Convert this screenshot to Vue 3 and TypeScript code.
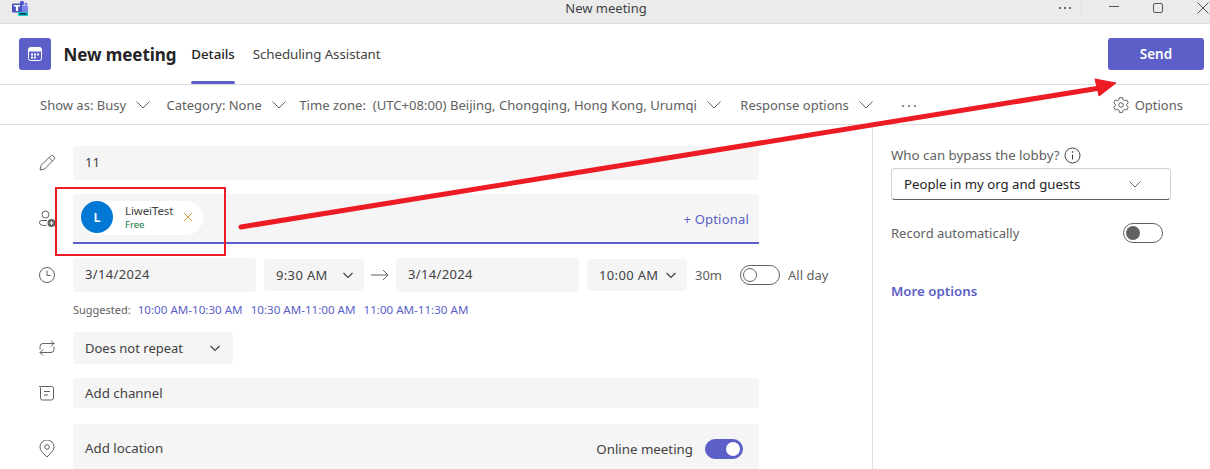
<script setup lang="ts">
const toolbar: string[] = ['Show as: Busy', 'Category: None', 'Time zone:  (UTC+08:00) Beijing, Chongqing, Hong Kong, Urumqi', 'Response options']
const slots: string[] = ['10:00 AM-10:30 AM', '10:30 AM-11:00 AM', '11:00 AM-11:30 AM']
</script>

<template>
  <div class="app">
    <div class="titlebar">
      <svg class="teams" width="18" height="16" viewBox="0 0 18 16">
        <circle cx="11" cy="3" r="2.2" fill="#5059c9" />
        <circle cx="15" cy="4" r="1.6" fill="#7b83eb" />
        <rect x="10" y="5.5" width="7" height="7" rx="1.5" fill="#7b83eb" />
        <rect x="1" y="3.5" width="10" height="9" rx="1" fill="#4b53bc" />
        <rect x="4.9" y="5" width="2.2" height="6" fill="#fff" />
        <rect x="3" y="5" width="6" height="1.6" fill="#fff" />
        <rect x="7" y="12" width="10" height="4" fill="#14c8c0" />
        <rect x="8.5" y="13" width="7" height="1.6" fill="#1b2a5c" />
      </svg>
      <span class="wintitle">New meeting</span>
      <div class="winctl">
        <span class="dots">
          <i></i><i></i><i></i>
        </span>
        <span class="sep"></span>
        <svg class="ctl1" width="12" height="12" viewBox="0 0 12 12"><path d="M1 4.500h10" stroke="#555" fill="none" /></svg>
        <svg class="ctl2" width="12" height="12" viewBox="0 0 12 12"><rect x="1.500" y="1.500" width="9" height="9" rx="1.500" stroke="#555" fill="none" /></svg>
        <svg class="ctl3" width="12" height="12" viewBox="0 0 12 12"><path d="M.5.5l11 11M11.500.5l-11 11" stroke="#555" fill="none" /></svg>
      </div>
    </div>

    <header class="head">
      <div class="logo">
        <svg width="16" height="16" viewBox="0 0 16 16">
          <rect x="1.500" y="1.500" width="13" height="13" rx="2" fill="none" stroke="#fff" stroke-width="1" />
          <rect x="1.500" y="1.500" width="13" height="4" rx="1.500" fill="#fff" />
          <g fill="#fff">
            <rect x="4" y="7.500" width="2" height="2" /><rect x="7" y="7.500" width="2" height="2" /><rect x="10" y="7.500" width="2" height="2" />
            <rect x="4" y="10.500" width="2" height="2" /><rect x="7" y="10.500" width="2" height="2" />
          </g>
        </svg>
      </div>
      <h1 class="h1">New meeting</h1>
      <nav class="tabs">
        <span class="tab active">Details</span>
        <span class="tab">Scheduling Assistant</span>
      </nav>
      <button class="send">Send</button>
    </header>

    <div class="toolbar">
      <span v-for="t in toolbar" :key="t" class="tool">
        {{ t }}
        <svg width="14" height="14" viewBox="0 0 14 14"><path d="M.5 3.500l6.500 6.500 6.500-6.500" fill="none" stroke="#616161" /></svg>
      </span>
      <span class="more"><i></i><i></i><i></i></span>
      <span class="options">
        <svg width="18" height="18" viewBox="0 0 18 18" fill="none" stroke="#616161">
          <path d="M7.400 1.600h3.200l.5 2.200 1.500.9 2.100-.7 1.600 2.800-1.600 1.500v1.400l1.600 1.500-1.600 2.800-2.100-.7-1.500.9-.5 2.200H7.400l-.5-2.200-1.500-.9-2.100.7-1.600-2.800 1.600-1.500V8.300L1.700 6.800l1.600-2.800 2.100.7 1.500-.9z" stroke-linejoin="round" />
          <circle cx="9" cy="9" r="2.300" />
        </svg>
        Options
      </span>
    </div>

    <div class="body">
      <main class="main">
        <div class="row r-title">
          <svg class="ic" width="18" height="18" viewBox="0 0 18 18" fill="none" stroke="#616161">
            <path d="M2 16l1-4.500L12.500 2a1.800 1.800 0 0 1 2.600 0l.9.9a1.800 1.800 0 0 1 0 2.600L6.500 15z" stroke-linejoin="round" /><path d="M11 3.500l3.500 3.500" />
          </svg>
          <div class="field f-title">11</div>
        </div>

        <div class="row r-att">
          <svg class="ic" width="18" height="18" viewBox="0 0 18 18" fill="none" stroke="#616161">
            <circle cx="7.500" cy="4.500" r="3.500" />
            <path d="M9 10.500H3.500A2 2 0 0 0 1.500 12.500c0 2 2 3 5 3h2" />
            <circle cx="13.500" cy="13" r="4" fill="#616161" stroke="none" />
            <path d="M13.500 11v4M11.500 13h4" stroke="#fff" />
          </svg>
          <div class="field f-att">
            <div class="chip">
              <span class="avatar">L</span>
              <span class="who">
                <span class="name">LiweiTest</span>
                <span class="free">Free</span>
              </span>
              <svg class="x" width="10" height="10" viewBox="0 0 10 10"><path d="M1 1l8 8M9 1l-8 8" stroke="#c8963c" fill="none" /></svg>
            </div>
            <span class="optional">+ Optional</span>
          </div>
        </div>

        <div class="row r-date">
          <svg class="ic" width="18" height="18" viewBox="0 0 18 18" fill="none" stroke="#616161">
            <circle cx="9" cy="9" r="7.500" /><path d="M9 4.500V9.500H12.500" />
          </svg>
          <div class="field f-date">3/14/2024</div>
          <div class="field f-time t1">9:30 AM
            <svg width="12" height="12" viewBox="0 0 12 12"><path d="M1.500 4l4.500 4.500L10.500 4" fill="none" stroke="#424242" stroke-width="1.200" /></svg>
          </div>
          <svg class="to" width="18" height="12" viewBox="0 0 18 12"><path d="M0 6h17M12 1l5 5-5 5" fill="none" stroke="#616161" /></svg>
          <div class="field f-date">3/14/2024</div>
          <div class="field f-time t2">10:00 AM
            <svg width="12" height="12" viewBox="0 0 12 12"><path d="M1.500 4l4.500 4.500L10.500 4" fill="none" stroke="#424242" stroke-width="1.200" /></svg>
          </div>
          <span class="dur">30m</span>
          <span class="toggle off"><i></i></span>
          <span class="allday">All day</span>
        </div>

        <div class="suggest">
          <span class="s-label">Suggested:</span>
          <span v-for="s in slots" :key="s" class="slot">{{ s }}</span>
        </div>

        <div class="row r-rep">
          <svg class="ic" width="18" height="18" viewBox="0 0 18 18" fill="none" stroke="#616161">
            <path d="M2 11V8a3 3 0 0 1 3-3h11M13 2l3 3-3 3" stroke-linejoin="round" transform="translate(0 -.5)" />
            <path d="M16 7v3a3 3 0 0 1-3 3H2M5 10l-3 3 3 3" stroke-linejoin="round" transform="translate(0 .5)" />
          </svg>
          <div class="field f-rep">Does not repeat
            <svg width="12" height="12" viewBox="0 0 12 12"><path d="M1.500 4l4.500 4.500L10.500 4" fill="none" stroke="#424242" stroke-width="1.200" /></svg>
          </div>
        </div>

        <div class="row r-chan">
          <svg class="ic" width="18" height="18" viewBox="0 0 18 18" fill="none" stroke="#616161">
            <path d="M2.500 3.500V14a2 2 0 0 0 2 2h9a2 2 0 0 0 2-2V4.500a2 2 0 0 0-2-2H1" /><path d="M6 7.500h6M6 11h4" />
          </svg>
          <div class="field f-chan">Add channel</div>
        </div>

        <div class="row r-loc">
          <svg class="ic" width="18" height="18" viewBox="0 0 18 18" fill="none" stroke="#616161">
            <path d="M9 17l-5-5.200a7 7 0 1 1 10 0z" stroke-linejoin="round" /><circle cx="9" cy="7" r="2.300" />
          </svg>
          <div class="field f-loc">
            <span class="loc-label">Add location</span>
            <span class="online">Online meeting <span class="toggle on"><i></i></span></span>
          </div>
        </div>
      </main>

      <aside class="side">
        <div class="lobby">
          Who can bypass the lobby?
          <svg width="17" height="17" viewBox="0 0 17 17" fill="none" stroke="#424242">
            <circle cx="8.500" cy="8.500" r="7.500" /><path d="M8.500 7.500v5" /><circle cx="8.500" cy="5" r=".5" />
          </svg>
        </div>
        <div class="select">
          People in my org and guests
          <svg width="14" height="14" viewBox="0 0 14 14"><path d="M1.500 4.500L7 10l5.500-5.500" fill="none" stroke="#616161" /></svg>
        </div>
        <div class="record">
          <span>Record automatically</span>
          <span class="toggle mid"><i></i></span>
        </div>
        <div class="moreopts">More options</div>
      </aside>
    </div>

    <div class="redbox"></div>
    <svg class="arrow" width="1210" height="469" viewBox="0 0 1210 469">
      <path d="M241 227L1100 88" stroke="#ed1c24" stroke-width="5" stroke-linecap="round" fill="none" />
      <path d="M1095 79L1116 83L1099 96Z" fill="#ed1c24" stroke="#ed1c24" stroke-width="1" stroke-linejoin="round" />
    </svg>
  </div>
</template>

<style scoped>
.app {
  position: relative;
  width: 1210px;
  height: 469px;
  overflow: hidden;
  background: #fff;
  font-family: "Noto Sans", "Open Sans", sans-serif;
  font-size: 13px;
  color: #424242;
}
.titlebar {
  height: 23px;
  background: #ebebeb;
  border-bottom: 1px solid #dbdbdb;
  display: flex;
  align-items: center;
  position: relative;
  padding-left: 11px;
  box-sizing: content-box;
}
.teams { margin-top: -7px; }
.wintitle {
  position: absolute;
  left: 0;
  right: 0;
  top: 0;
  text-align: center;
  font-size: 13px;
  line-height: 17px;
  color: #424242;
  padding-left: 2px;
}
.winctl {
  position: absolute;
  right: 0;
  top: 0;
  height: 16px;
  display: flex;
  align-items: center;
}
.dots { display: flex; gap: 3px; margin-right: 10px; }
.dots i { width: 2px; height: 2px; background: #444; border-radius: 50%; }
.sep { width: 1px; height: 18px; background: #e0e0e0; margin-right: 26px; }
.ctl1 { margin-right: 32px; }
.ctl2 { margin-right: 33px; }
.ctl3 { margin-right: 1px; }

.head {
  height: 61px;
  border-bottom: 1px solid #e0e0e0;
  display: flex;
  align-items: flex-start;
  padding: 14px 6px 0 19px;
  box-sizing: border-box;
}
.logo {
  width: 32px;
  height: 32px;
  background: #5b5fc7;
  border-radius: 3px;
  display: flex;
  align-items: center;
  justify-content: center;
  flex: none;
}
.h1 {
  margin: 1px 0 0 12.500px;
  font-size: 17px;
  font-weight: 700;
  line-height: 32px;
  color: #242424;
  letter-spacing: -.08px;
}
.tabs { display: flex; gap: 18px; margin-left: 15px; height: 46px; }
.tab {
  font-size: 13.300px;
  line-height: 32px;
  color: #424242;
  position: relative;
  letter-spacing: -.05px;
}
.tab.active { color: #242424; font-weight: 500; }
.tab.active::after {
  content: "";
  position: absolute;
  left: 0;
  right: 0;
  bottom: 0;
  height: 3px;
  background: #5b5fc7;
  border-radius: 2px;
}
.send {
  margin-left: auto;
  width: 96px;
  height: 32px;
  background: #5b5fc7;
  color: #fff;
  border: 0;
  border-radius: 3px;
  font: 600 13.500px "Noto Sans", sans-serif;
}

.toolbar {
  height: 39px;
  border-bottom: 1px solid #e0e0e0;
  display: flex;
  align-items: center;
  padding: 0 27px 0 40px;
  box-sizing: content-box;
  font-size: 13px;
  color: #616161;
}
.tool {
  display: inline-flex;
  align-items: center;
  gap: 7px;
  margin-right: 16px;
  white-space: pre-wrap;
}
.tool:nth-child(2) { margin-right: 13px; }
.tool:nth-child(3) { font-size: 13.100px; margin-right: 19px; }
.more { display: flex; gap: 4px; margin-left: 13px; margin-top: 2px; }
.more i { width: 2px; height: 2px; background: #616161; border-radius: 50%; }
.options { margin-left: auto; display: inline-flex; align-items: center; gap: 5px; }

.body { display: flex; height: 344px; }
.main {
  width: 872px;
  border-right: 1px solid #e0e0e0;
  box-sizing: content-box;
  padding-top: 21px;
  flex: none;
}
.row { display: flex; align-items: center; padding-left: 73px; position: relative; }
.ic { position: absolute; left: 38px; top: 50%; margin-top: -9px; }
.field {
  background: #f5f5f5;
  border-radius: 4px;
  display: flex;
  align-items: center;
  padding: 0 12px;
  box-sizing: border-box;
  font-size: 13px;
  color: #424242;
}
.f-title, .f-att, .f-chan, .f-loc { width: 686px; }
.f-title { height: 34px; padding-bottom: 2px; }
.r-att { margin-top: 14px; }
.f-att {
  height: 50px;
  padding: 7px 10px 0 8px;
  align-items: flex-start;
  border-bottom: 2px solid #5b5fc7;
  border-radius: 4px 4px 0 0;
  justify-content: space-between;
}
.chip {
  width: 122px;
  height: 34px;
  background: #fff;
  border-radius: 17px;
  display: flex;
  align-items: flex-start;
  box-sizing: border-box;
}
.avatar {
  width: 32px;
  height: 32px;
  background: #0078d4;
  color: #fff;
  border-radius: 50%;
  font-weight: 600;
  font-size: 13px;
  line-height: 32px;
  text-align: center;
  flex: none;
}
.who { display: flex; flex-direction: column; margin-left: 12px; }
.name { font-size: 11.500px; line-height: 14px; margin-top: 3px; color: #424242; letter-spacing: -.1px; }
.free { font-size: 9.500px; line-height: 12px; margin-top: 1px; color: #107c41; }
.x { margin-left: auto; margin-right: 10px; margin-top: 11px; }
.optional { color: #5b5fc7; font-size: 13px; margin-top: 9px; letter-spacing: .2px; }

.r-date { margin-top: 14px; }
.f-date { width: 183px; height: 34px; letter-spacing: .35px; padding-bottom: 2px; }
.f-time { height: 32px; justify-content: space-between; margin-left: 8px; width: 100px; letter-spacing: .35px; padding-right: 10px; }
.to { margin: 0 7px; }
.dur { margin-left: 8px; color: #616161; font-size: 13px; }
.toggle {
  display: inline-block;
  width: 40px;
  height: 20px;
  border-radius: 10px;
  border: 1px solid #616161;
  box-sizing: border-box;
  position: relative;
  flex: none;
}
.toggle i { position: absolute; top: 2px; width: 14px; height: 14px; border-radius: 50%; }
.toggle.off { margin-left: 18px; }
.toggle.off i { left: 2px; border: 1px solid #616161; box-sizing: border-box; }
.toggle.mid i { left: 2px; background: #616161; }
.toggle.on { background: #5b5fc7; border-color: #5b5fc7; margin-left: 12px; width: 38px; }
.toggle.on i { right: 2px; background: #fff; }
.allday { margin-left: 8px; color: #616161; }

.suggest {
  margin-left: 73px;
  margin-top: 9px;
  height: 21px;
  font-size: 11px;
  line-height: 18px;
  display: flex;
  color: #616161;
}
.s-label { margin-right: 7px; }
.slot { color: #5b5fc7; margin-right: 8px; font-size: 11.600px; }

.r-rep { margin-top: 10px; }
.f-rep { width: 160px; height: 32px; justify-content: space-between; }
.r-chan { margin-top: 14px; }
.f-chan { height: 30px; font-size: 13.300px; }
.r-loc { margin-top: 16px; }
.f-loc { height: 50px; justify-content: space-between; padding-right: 16px; font-size: 13.300px; }
.loc-label { margin-top: -2px; }
.online { display: inline-flex; align-items: center; }

.side { flex: 1; padding: 20px 39px 0 18px; }
.lobby {
  display: flex;
  align-items: center;
  gap: 5px;
  height: 20px;
  font-size: 13.300px;
  color: #616161;
}
.select {
  margin-top: 3px;
  height: 32px;
  border: 1px solid #d1d1d1;
  border-bottom-color: #616161;
  border-radius: 4px;
  box-sizing: border-box;
  display: flex;
  align-items: center;
  justify-content: space-between;
  padding: 0 28px 0 12px;
  color: #242424;
  font-size: 13.200px;
}
.record {
  margin-top: 23px;
  height: 20px;
  display: flex;
  align-items: center;
  justify-content: space-between;
  padding-right: 8px;
  color: #616161;
}
.moreopts {
  margin-top: 38px;
  font-weight: 600;
  color: #5b5fc7;
  font-size: 13.300px;
  line-height: 20px;
}

.redbox {
  position: absolute;
  left: 55px;
  top: 187px;
  width: 171px;
  height: 69px;
  border: 2px solid #ed1c24;
  box-sizing: border-box;
}
.arrow { position: absolute; left: 0; top: 0; pointer-events: none; }
</style>
